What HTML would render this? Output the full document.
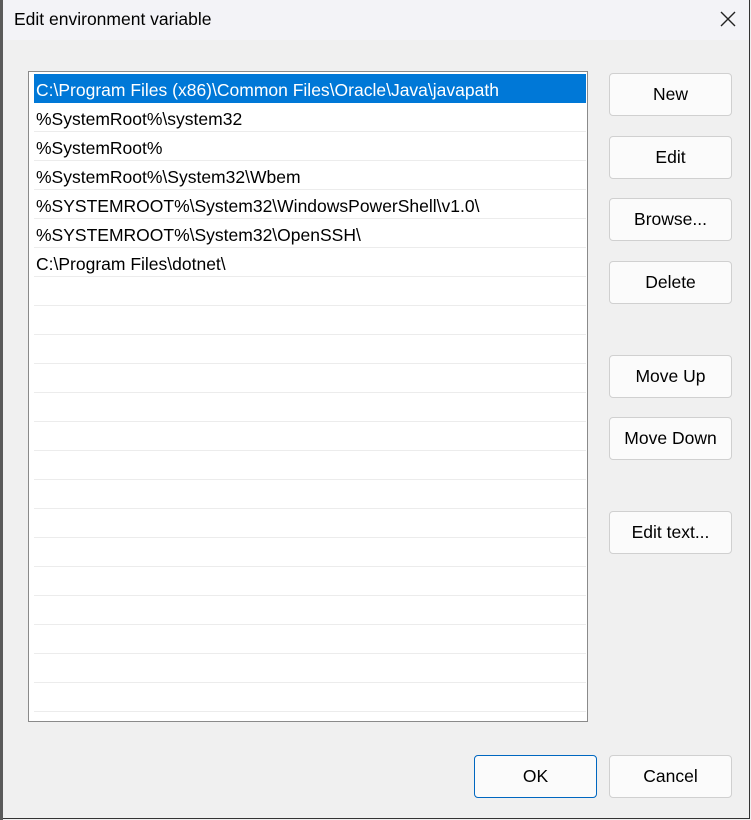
<!DOCTYPE html>
<html><head><style>
*{margin:0;padding:0;box-sizing:border-box}
body{width:751px;height:820px;overflow:hidden;background:#f0f0f0;font-family:"Liberation Sans",sans-serif;font-size:17.5px;color:#000;position:relative}
.lstrip{position:absolute;left:0;top:0;width:3px;height:820px;background:#5a5a5a}
.win{position:absolute;left:3px;top:0;width:747px;height:819px;background:#f0f0f0;border-right:1px solid #333;border-bottom:1px solid #333}
.title{position:absolute;left:3px;top:0;width:746px;height:40px;background:#f3f3f7}
.list{position:absolute;left:28px;top:71px;width:560px;height:651px;background:#fff;border:1px solid #8a8a8a}
.row{position:absolute;left:5px;width:552px;height:29px;border-bottom:1px solid #ececec;padding-left:2px;padding-top:2px;line-height:28px;white-space:nowrap}
.sel{background:#0078d7;color:#fff;border-bottom:none}
.btn{position:absolute;width:123px;height:43px;background:#fbfbfb;border:1px solid #d0d0d0;border-radius:4px;text-align:center;line-height:41px}
.ok{border:1px solid #0067c0}
</style></head><body>
<div class="lstrip"></div>
<div class="win"></div>
<div class="title"><span style="position:absolute;left:11px;top:9px">Edit environment variable</span>
<svg style="position:absolute;left:716px;top:10px" width="18" height="18" viewBox="0 0 18 18"><path d="M2 2L16 16M16 2L2 16" stroke="#222" stroke-width="1.4"/></svg></div>
<div class="list">
<div class="row sel" style="top:2px">C:\Program Files (x86)\Common Files\Oracle\Java\javapath</div>
<div class="row" style="top:31px">%SystemRoot%\system32</div>
<div class="row" style="top:60px">%SystemRoot%</div>
<div class="row" style="top:89px">%SystemRoot%\System32\Wbem</div>
<div class="row" style="top:118px">%SYSTEMROOT%\System32\WindowsPowerShell\v1.0\</div>
<div class="row" style="top:147px">%SYSTEMROOT%\System32\OpenSSH\</div>
<div class="row" style="top:176px">C:\Program Files\dotnet\</div>
<div class="row" style="top:205px"></div><div class="row" style="top:234px"></div><div class="row" style="top:263px"></div><div class="row" style="top:292px"></div><div class="row" style="top:321px"></div><div class="row" style="top:350px"></div><div class="row" style="top:379px"></div><div class="row" style="top:408px"></div><div class="row" style="top:437px"></div><div class="row" style="top:466px"></div><div class="row" style="top:495px"></div><div class="row" style="top:524px"></div><div class="row" style="top:553px"></div><div class="row" style="top:582px"></div><div class="row" style="top:611px"></div>
</div>
<div class="btn" style="left:609px;top:73px">New</div>
<div class="btn" style="left:609px;top:136px">Edit</div>
<div class="btn" style="left:609px;top:198px">Browse...</div>
<div class="btn" style="left:609px;top:261px">Delete</div>
<div class="btn" style="left:609px;top:355px">Move Up</div>
<div class="btn" style="left:609px;top:417px">Move Down</div>
<div class="btn" style="left:609px;top:511px">Edit text...</div>
<div class="btn ok" style="left:474px;top:755px">OK</div>
<div class="btn" style="left:609px;top:755px">Cancel</div>
</body></html>
